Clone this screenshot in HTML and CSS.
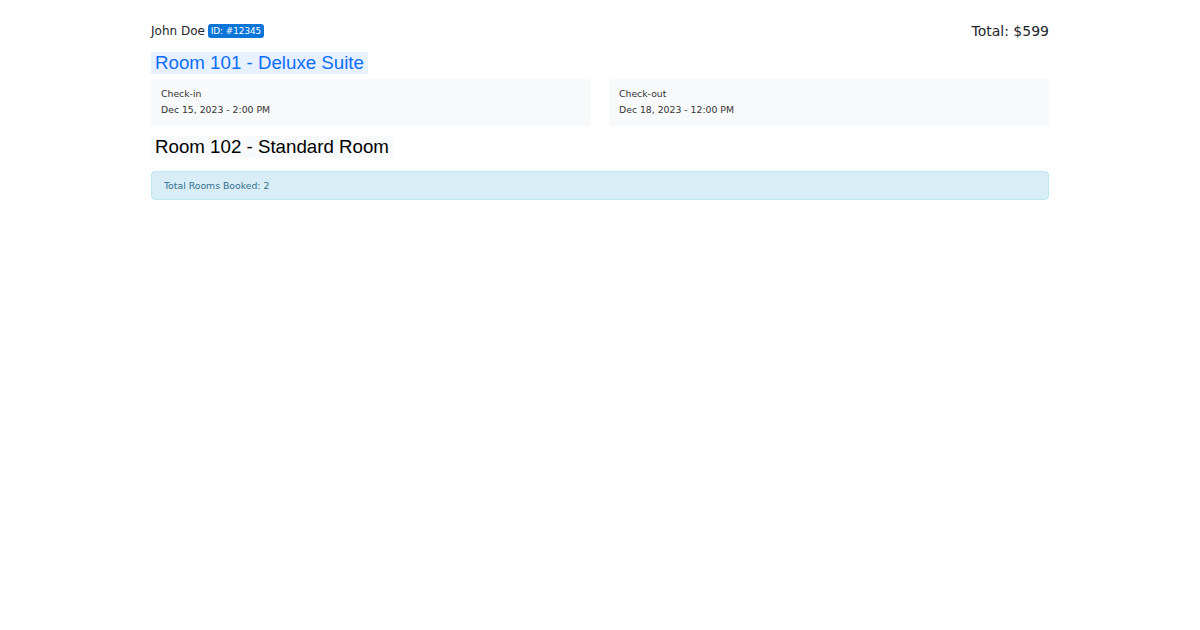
FILE: index.html
```html
<!DOCTYPE html>
<html lang="en">
<head>
    <meta charset="UTF-8">
    <meta name="viewport" content="width=device-width, initial-scale=1.0">
    <title>Booking Summary</title>
    <link rel="stylesheet" href="styles.css">
</head>
<body>

    <main class="booking">
        <div class="booking-header">
            <div class="guest">
                John Doe <span class="badge">ID: #12345</span>
            </div>
            <div class="total">Total: $599</div>
        </div>

        <h2 class="room room-active">Room 101 - Deluxe Suite</h2>
        <div class="stay">
            <div class="stay-card">
                <div class="stay-label">Check-in</div>
                <div class="stay-date">Dec 15, 2023 - 2:00 PM</div>
            </div>
            <div class="stay-card">
                <div class="stay-label">Check-out</div>
                <div class="stay-date">Dec 18, 2023 - 12:00 PM</div>
            </div>
        </div>

        <h2 class="room">Room 102 - Standard Room</h2>

        <div class="alert">Total Rooms Booked: 2</div>
    </main>

</body>
</html>
```

FILE: styles.css
```css
body {
    margin: 0;
    font-family: 'DejaVu Sans', sans-serif;
    background-color: #fff;
    color: #212529;
}

.booking {
    width: 898px;
    margin: 0 auto;
    padding-top: 20px;
}

.booking-header {
    display: flex;
    justify-content: space-between;
    align-items: center;
    height: 21px;
}

.guest {
    font-size: 12px;
}

.badge {
    display: inline-block;
    background-color: #0b76d8;
    color: #fff;
    font-size: 8.8px;
    padding: 2px 3px;
    border-radius: 3px;
    vertical-align: 1px;
    margin-left: -1px;
}

.total {
    font-size: 14px;
}

.room {
    display: inline-block;
    margin: 11px 0 0;
    padding: 0 4px;
    font-family: 'Liberation Sans', Arial, sans-serif;
    font-size: 18.72px;
    font-weight: normal;
    line-height: 22px;
    background-color: #f8f9fa;
    color: #000;
}

.room-active {
    background-color: #e7f1ff;
    color: #0d6efd;
}

.stay {
    display: grid;
    grid-template-columns: 1fr 1fr;
    gap: 18px;
    margin-top: 5px;
    margin-bottom: -1px;
}

.stay-card {
    background-color: #f8f9fa;
    padding: 7px 10px 8px;
    font-size: 9.3px;
    line-height: 16px;
    color: #333;
}

.alert {
    margin-top: 13px;
    padding: 7px 12px;
    font-size: 9.3px;
    line-height: 13px;
    background-color: #d9edf7;
    border: 1px solid #bce8f1;
    border-radius: 4px;
    color: #31708f;
}
```
